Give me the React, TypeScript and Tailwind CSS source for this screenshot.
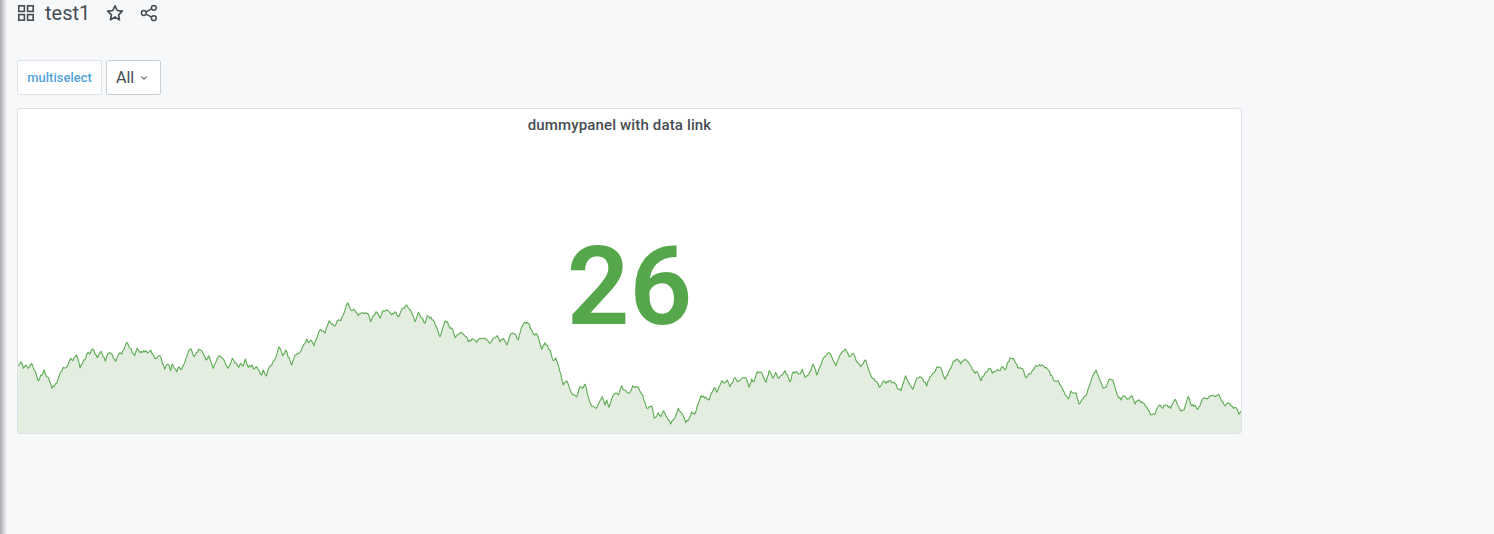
import { ChevronDown } from "lucide-react";

// sparkline traced from the reference: [x offset, y offset, flat x/y list at 3x]
const traced: [number, number, number[]][] = [
  [0, 290, [55,228,63,215,70,235,78,225,84,235,95,220,103,240,115,272,132,240,138,258,145,262,156,295,170,280,183,245,190,232,200,232,212,205,218,212,230,195,240,233,265,187,270,192,278,177,292,203,304,184,316,214,325,190,333,190,347,214,360,188,365,192,380,157,390,175,404,197,412,175,420,188,438,182,445,188,452,180,464,205,480,197,494,238,504,222,512,242,516,222,530,245,535,232,545,238,556,213,568,178,574,177,582,200,596,178,605,183,618,210,626,197,640,235,652,205,660,197,668,205,684,235,697,205,716,232,722,220,730,228,736,207,745,232,756,225,762,238,770,230,785,255,790,240,799,258,808,230,824,210,838,170,848,197,857,180,875,225,885,195]],
  [300, 290, [0,187,20,147,27,158,33,150,42,167,58,122,70,122,75,130,88,92,95,103,105,108,115,90,122,92,130,75,143,38,155,62,163,58,175,77,185,68,195,68,203,70,212,95,228,65,240,85,250,62,262,60,275,75,285,65,296,80,305,58,320,45,332,62,345,95,355,67,375,100,382,77,400,90,420,140,435,93,442,95,450,115,458,118,466,143,482,127,498,140,505,155,520,148,530,157,542,145,555,145,570,160,580,145,592,137,600,155,610,145,620,165,632,132,645,133,655,150,665,110,675,97,685,100,700,132,712,135,725,178,735,158,750,180,760,212,767,203,780,245,790,285,800,272,815,310,830,320,840,290,848,295,855,283,862,310,875,348,887,355]],
  [600, 330, [0,213,7,200,15,225,20,210,27,232,38,198,45,190,55,195,65,167,72,180,88,190,98,167,115,172,128,195,140,235,155,228,163,265,175,248,182,260,190,242,205,270,212,282,222,268,235,235,245,250,257,278,268,265,275,245,285,252,303,197,328,210,335,188,345,173,350,187,365,152,375,158,382,150,390,170,405,143,412,155,425,145,437,143,447,172,455,147,462,155,470,128,485,128,498,157,508,122,518,145,527,127,535,145,545,135,555,122,570,155,580,125,600,132,607,118,615,142,625,135,640,103,650,135,660,110,670,85,685,68,695,80,708,107,720,75,735,57,748,80,760,70,772,97,782,110,797,90,810,130,818,145,830,155,838,172,850,153,858,160,868,152,885,160,892,175,903,182,917,137,930,165,938,178,950,145]],
  [920, 330, [0,140,8,147,20,168,30,140,42,128,50,112,62,112,75,148,85,128,102,92,112,87,122,102,135,87,150,105,165,130,172,125,183,152,195,130,210,115,217,130,232,118,240,122,247,110,255,120,270,83,280,85,297,115,307,115,318,143,335,125,345,110,365,105,385,120,403,153,415,152,432,185,445,207,453,183,462,190,468,188,477,222,485,210,498,197,515,145,528,120,550,175,558,172,568,148,578,150,592,195,603,210,610,197,622,208,635,197,645,222,655,210,670,220,680,230,692,255,705,252,718,225,728,235,735,225,752,235,765,208,780,240,792,240,805,200,815,228,825,225,833,238,848,207,860,207,872,197,885,200,895,193,915,228,925,218,940,235,947,232,957,253,963,243]],
];

// panel's inner box starts at 18,109
const anchors: [number, number][] = [];
traced.forEach(([ox, oy, list]) => {
  for (let i = 0; i < list.length; i += 2) {
    anchors.push([ox + list[i] / 3 - 18, oy + list[i + 1] / 3 - 109]);
  }
});

// fill in the fine jitter of the series between the traced points
const linePoints: string[] = [];
anchors.forEach(([x, y], i) => {
  const next = anchors[i + 1];
  linePoints.push(`${x.toFixed(1)},${y.toFixed(1)}`);
  if (!next) return;
  const steps = Math.floor((next[0] - x) / 1.1);
  for (let s = 1; s < steps; s++) {
    const t = s / steps;
    const px = x + (next[0] - x) * t;
    const py = y + (next[1] - y) * t + (Math.sin(px * 12.9898) * 43758.5453) % 1 * 1.2;
    linePoints.push(`${px.toFixed(1)},${py.toFixed(1)}`);
  }
});
const line = linePoints.join(" ");
const area = `0,324 ${line} 1223,324`;

function DashIcon() {
  return (
    <svg width="18" height="18" viewBox="0 0 18 18" fill="none" stroke="#464c54" strokeWidth="1.6">
      <rect x="1.8" y="1.8" width="5.6" height="5.6" />
      <rect x="10.6" y="1.8" width="5.6" height="5.6" />
      <rect x="1.8" y="10.6" width="5.6" height="5.6" />
      <rect x="10.6" y="10.6" width="5.6" height="5.6" />
    </svg>
  );
}

function StarIcon() {
  return (
    <svg width="18" height="18" viewBox="0 0 18 18" fill="none" stroke="#464c54" strokeWidth="1.7" strokeLinejoin="round">
      <path d="M9 1.8l2.2 4.7 5.1.7-3.7 3.6.9 5.1L9 13l-4.5 2.9.9-5.1-3.7-3.6 5.1-.7z" />
    </svg>
  );
}

function ShareIcon() {
  return (
    <svg width="18" height="18" viewBox="0 0 18 18" fill="none" stroke="#464c54" strokeWidth="1.5">
      <circle cx="3.8" cy="9" r="2.4" />
      <circle cx="13.8" cy="3.8" r="2.4" />
      <circle cx="13.8" cy="14.2" r="2.4" />
      <path d="M6 7.9l5.6-3M6 10.1l5.6 3" />
    </svg>
  );
}

export default function App() {
  return (
    <div className="relative h-[534px] w-[1494px] overflow-hidden bg-[#f7f8fa] font-['Roboto',sans-serif] text-[#464c54]">
      <div className="absolute left-0 top-0 h-full w-[7px] bg-gradient-to-r from-[#a8aab0] to-[#f7f8fa]"></div>

      <div className="pl-[17px] w-[1242px]">
        <div className="flex h-[26px] items-center">
          <DashIcon />
          <span className="ml-[10px] text-[20px] leading-[26px]">test1</span>
          <span className="ml-[16px] flex"><StarIcon /></span>
          <span className="ml-[16px] flex"><ShareIcon /></span>
        </div>

        <div className="mt-[34px] flex h-[35px] gap-[4px]">
          <div className="flex w-[85px] items-center justify-center rounded-[2px] border border-[#dde4ed] bg-white text-[13px] font-medium text-[#52a3dc]">
            multiselect
          </div>
          <div className="flex w-[55px] items-center rounded-[2px] border border-[#c7d0d9] bg-white pl-[9px] text-[16px]">
            All
            <ChevronDown size={10} strokeWidth={2.5} className="ml-[5px]" />
          </div>
        </div>

        <div className="relative mt-[13px] h-[326px] rounded-[3px] border border-[#dde0e4] bg-white">
          <svg className="absolute left-0 top-0" width="1223" height="324" viewBox="0 0 1223 324">
            <polygon points={area} fill="#e3eee0" />
            <polyline points={line} fill="none" stroke="#5dab53" strokeWidth="1.1" strokeLinejoin="round" />
          </svg>
          <div className="relative pr-[20px] pt-[7px] text-center text-[15px] font-medium leading-[18px] tracking-[0.15px]">
            dummypanel with data link
          </div>
          <div className="relative mt-[96px] text-center text-[110px] font-semibold leading-[114px] text-[#56a64b]">
            26
          </div>
        </div>
      </div>
    </div>
  );
}
